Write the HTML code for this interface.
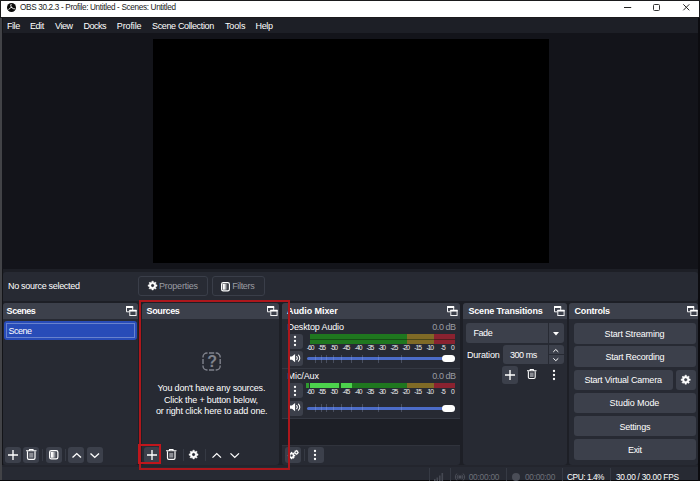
<!DOCTYPE html>
<html><head><meta charset="utf-8"><title>OBS 30.2.3 - Profile: Untitled - Scenes: Untitled</title>
<style>
*{box-sizing:border-box;margin:0;padding:0}
html,body{width:700px;height:481px;overflow:hidden;background:#1d1f26;font-family:"Liberation Sans","DejaVu Sans",sans-serif;color:#fff;font-size:9px}
.a{position:absolute}
.t{position:absolute;white-space:nowrap;line-height:12px;height:12px}
.dock{position:absolute;background:#272a33;border-radius:3px}
.dh{position:absolute;left:0;top:0;right:0;height:16px;background:#3c404b;border-radius:3px 3px 0 0}
.btn{position:absolute;background:#3c404b;border-radius:3px}
.sep{position:absolute;width:1px;background:#363a44}
svg{position:absolute;overflow:visible}
</style></head><body>
<!-- title bar -->
<div class="a" style="left:0;top:0;width:700px;height:18px;background:#1a1a1c"></div>
<div class="a" style="left:1px;top:1px;width:698px;height:16px;background:#fff"></div>
<svg style="left:7px;top:2.6px" width="9" height="9" viewBox="0 0 18 18"><circle cx="9" cy="9" r="9" fill="#0b0b0b"/><g fill="none" stroke="#fff" stroke-width="1.8" stroke-linecap="round"><path d="M8.2 2.6c-1.6 2.2-1 4.8 1.2 6.2"/><path d="M15 11.6c-2.7.3-4.700-1.400-5.600-2.800"/><path d="M3.600 12.800c1.100-2.500 3.500-3.400 5.800-4"/></g></svg>
<svg style="left:623.5px;top:7px" width="8" height="1"><rect width="7.2" height="1" fill="#222"/></svg>
<svg style="left:653px;top:4px" width="7" height="7"><rect x=".5" y=".5" width="6" height="6" rx="1" fill="none" stroke="#333" stroke-width="1"/></svg>
<svg style="left:682.5px;top:4px" width="7" height="7"><path d="M.3.3l6 6M6.300.3l-6 6" stroke="#222" stroke-width="1" fill="none"/></svg>
<!-- left window border -->
<div class="a" style="left:0;top:18px;width:2px;height:463px;background:#424347"></div>
<div class="a" style="left:2px;top:18px;width:1px;height:463px;background:#131418"></div>
<!-- menubar -->
<div class="a" style="left:3px;top:18px;width:695px;height:15px;background:#1d1f26"></div>
<!-- preview -->
<div class="a" style="left:2px;top:33px;width:698px;height:236px;background:#13141a"></div>
<div class="a" style="left:153px;top:39px;width:396px;height:224px;background:#000"></div>
<!-- context bar -->
<div class="a" style="left:3px;top:272px;width:695px;height:29px;background:#272a33;border-radius:3px 3px 3px 0"></div>
<div class="a" style="left:138px;top:276px;width:70px;height:20px;border:1px solid #3a3e49;border-radius:3px;background:#282b34"></div>
<svg style="left:147.500px;top:281.4px" width="9.2" height="9.2" viewBox="1.400 1.400 21.200 21.200"><path fill="#fff" fill-rule="evenodd" stroke="#fff" stroke-width="1" stroke-linejoin="round" d="M10.16 4.32L10.37 1.73L13.63 1.73L13.84 4.32L16.13 5.26L18.11 3.59L20.41 5.89L18.74 7.87L19.68 10.16L22.27 10.37L22.27 13.63L19.68 13.84L18.74 16.13L20.41 18.11L18.11 20.41L16.13 18.74L13.84 19.68L13.63 22.27L10.37 22.27L10.16 19.68L7.87 18.74L5.89 20.41L3.59 18.11L5.26 16.13L4.32 13.84L1.73 13.63L1.73 10.37L4.32 10.16L5.26 7.87L3.59 5.89L5.89 3.59L7.87 5.26zM16.00 12a4.0 4.0 0 1 0 -8.00 0a4.0 4.0 0 1 0 8.00 0z"/></svg>
<div class="a" style="left:212px;top:276px;width:53px;height:20px;border:1px solid #3a3e49;border-radius:3px;background:#282b34"></div>
<svg style="left:221px;top:281.500px" width="9" height="9.5" viewBox="0 0 9 9.500"><defs><linearGradient id="fg" x1="0" x2="1" y1="0" y2="0"><stop offset="0" stop-color="#fff"/><stop offset=".25" stop-color="#fff"/><stop offset=".9" stop-color="#fff" stop-opacity=".05"/></linearGradient></defs><rect x=".6" y=".6" width="7.800" height="8.300" rx="1.600" fill="none" stroke="#fff" stroke-width="1.150"/><rect x="1.700" y="1.700" width="5.600" height="6.100" rx=".5" fill="url(#fg)"/></svg>

<!-- Scenes dock -->
<div class="dock" style="left:3px;top:303px;width:135px;height:162px"><div class="dh"></div>
 <div class="a" style="left:1px;top:18px;width:133px;height:19px;background:#284cb8;border-radius:3px"></div>
 <div class="a" style="left:3px;top:20px;width:129px;height:15px;border:1px solid rgba(255,255,255,.3)"></div>
 <!-- toolbar -->
 <div class="btn" style="left:2px;top:144px;width:16px;height:16px"></div>
 <div class="btn" style="left:20px;top:144px;width:16px;height:16px"></div>
 <div class="sep" style="left:39px;top:146px;height:12px"></div>
 <div class="btn" style="left:43px;top:144px;width:16px;height:16px"></div>
 <div class="sep" style="left:62px;top:146px;height:12px"></div>
 <div class="btn" style="left:65px;top:144px;width:16px;height:16px"></div>
 <div class="btn" style="left:84px;top:144px;width:16px;height:16px"></div>
</div>
<svg style="left:7.500px;top:450px" width="10" height="10"><path d="M5 0v10M0 5h10" stroke="#fff" stroke-width="1.350" fill="none"/></svg>
<svg style="left:26px;top:449px" width="11" height="11" viewBox="0 0 11 11"><use href="#trash"/></svg>
<svg style="left:48.500px;top:450px" width="9.500" height="9.500" viewBox="0 0 9 9.500" preserveAspectRatio="none"><rect x=".6" y=".6" width="7.800" height="8.300" rx="1.600" fill="none" stroke="#fff" stroke-width="1.150"/><rect x="1.700" y="1.700" width="5.600" height="6.100" rx=".5" fill="url(#fg)"/></svg>
<svg style="left:71.500px;top:452.500px" width="9.500" height="5"><path d="M.5 4.600L4.750.6 9 4.600" stroke="#fff" stroke-width="1.400" fill="none"/></svg>
<svg style="left:90.300px;top:452.500px" width="9.500" height="5"><path d="M.5.4L4.750 4.400 9 .4" stroke="#fff" stroke-width="1.400" fill="none"/></svg>

<!-- Sources dock -->
<div class="dock" style="left:142px;top:303px;width:137px;height:162px"><div class="dh"></div>
 <div class="btn" style="left:2px;top:144px;width:16px;height:16px"></div>
 <div class="sep" style="left:41px;top:146px;height:12px"></div>
 <div class="sep" style="left:63px;top:146px;height:12px"></div>
</div>
<svg style="left:203.400px;top:352.600px" width="17.2" height="17.0" viewBox="0 0 17.2 17.0"><path d="M0 4.5V4.0A4.0 4.0 0 0 1 4.0 0H4.5M12.7 0H13.2A4.0 4.0 0 0 1 17.2 4.0V4.5M17.2 12.5V13.0A4.0 4.0 0 0 1 13.2 17.0H12.7M4.5 17.0H4.0A4.0 4.0 0 0 1 0 13.0V12.5M6.0 0H11.2M6.0 17.0H11.2M0 5.9V11.1M17.2 5.9V11.1" fill="none" stroke="#80838d" stroke-width="1.400"/></svg>
<div class="a" style="left:202.600px;top:352.400px;width:19px;height:19px;line-height:19px;text-align:center;font-size:16px;font-weight:bold;color:#80838d">?</div>
<svg style="left:147.300px;top:450px" width="10" height="10"><path d="M5 0v10M0 5h10" stroke="#fff" stroke-width="1.350" fill="none"/></svg>
<svg style="left:166px;top:449px" width="11" height="11" viewBox="0 0 11 11"><use href="#trash"/></svg>
<svg style="left:189px;top:450.400px" width="9.200" height="9.200" viewBox="1.400 1.400 21.200 21.200"><use href="#gear"/></svg>
<svg style="left:211.500px;top:452.500px" width="9.500" height="5"><path d="M.5 4.600L4.750.6 9 4.600" stroke="#fff" stroke-width="1.300" fill="none"/></svg>
<svg style="left:230.200px;top:452.500px" width="9.500" height="5"><path d="M.5.4L4.750 4.400 9 .4" stroke="#fff" stroke-width="1.300" fill="none"/></svg>

<!-- Audio Mixer dock -->
<div class="dock" style="left:282px;top:303px;width:178px;height:162px"><div class="dh"></div>
 <div class="a" style="left:0;top:116px;width:178px;height:26px;background:#1d1f26"></div>
 <div class="a" style="left:0;top:65px;width:178px;height:1px;background:#343842"></div>
 <div class="a" style="left:0;top:115px;width:178px;height:1px;background:#343842"></div>
 <div class="a" style="left:0;top:142px;width:178px;height:1px;background:#30333c"></div>
 <!-- desktop audio -->
 <div class="btn" style="left:6px;top:31px;width:15px;height:15px"></div>
 <div class="btn" style="left:6px;top:48px;width:15px;height:15px"></div>
 <div class="a" style="left:28px;top:31px;width:145px;height:10px;background:linear-gradient(90deg,#1f771f 0,#1f771f 97px,#7f6a26 97px,#7f6a26 124px,#8a2230 124px)"></div>
 <div class="a" style="left:28px;top:35.500px;width:145px;height:1px;background:#0c1a0c;opacity:.45"></div>
 <div class="a" style="left:25px;top:54px;width:148px;height:3px;background:#4c6cc8;border-radius:1.500px"></div>
 <div class="a" style="left:160px;top:52px;width:13px;height:7px;background:#fff;border-radius:3.500px"></div>
 <!-- mic -->
 <div class="btn" style="left:6px;top:80px;width:15px;height:15px"></div>
 <div class="btn" style="left:6px;top:98px;width:15px;height:15px"></div>
 <div class="a" style="left:28px;top:80px;width:145px;height:5px;background:linear-gradient(90deg,#4cd24c 0,#4cd24c 29px,#1a4f1a 29px,#1a4f1a 31px,#4cd24c 31px,#4cd24c 42px,#1f771f 42px,#1f771f 97px,#7f6a26 97px,#7f6a26 124px,#8a2230 124px)"></div>
 <div class="a" style="left:24px;top:80px;width:2.500px;height:5px;background:#2f9a2f"></div>
 <div class="a" style="left:25px;top:103.500px;width:148px;height:3px;background:#4c6cc8;border-radius:1.500px"></div>
 <div class="a" style="left:160px;top:101.500px;width:13px;height:7px;background:#fff;border-radius:3.500px"></div>
 <!-- toolbar -->
 <div class="btn" style="left:3px;top:144px;width:16px;height:16px"></div>
 <div class="sep" style="left:22px;top:146px;height:12px"></div>
 <div class="btn" style="left:26px;top:144px;width:16px;height:16px"></div>
</div>
<div class="a" style="left:315.0px;top:354.5px;width:1px;height:8px;background:#a9b6de;opacity:.26"></div>
<div class="a" style="left:320.5px;top:354.5px;width:1px;height:8px;background:#a9b6de;opacity:.26"></div>
<div class="a" style="left:326.2px;top:354.5px;width:1px;height:8px;background:#a9b6de;opacity:.26"></div>
<div class="a" style="left:333.1px;top:354.5px;width:1px;height:8px;background:#a9b6de;opacity:.26"></div>
<div class="a" style="left:340.9px;top:354.5px;width:1px;height:8px;background:#a9b6de;opacity:.26"></div>
<div class="a" style="left:350.9px;top:354.5px;width:1px;height:8px;background:#a9b6de;opacity:.26"></div>
<div class="a" style="left:361.7px;top:354.5px;width:1px;height:8px;background:#a9b6de;opacity:.26"></div>
<div class="a" style="left:377.9px;top:354.5px;width:1px;height:8px;background:#a9b6de;opacity:.26"></div>
<div class="a" style="left:400.8px;top:354.5px;width:1px;height:8px;background:#a9b6de;opacity:.26"></div>
<div class="a" style="left:315.0px;top:404.0px;width:1px;height:8px;background:#a9b6de;opacity:.26"></div>
<div class="a" style="left:320.5px;top:404.0px;width:1px;height:8px;background:#a9b6de;opacity:.26"></div>
<div class="a" style="left:326.2px;top:404.0px;width:1px;height:8px;background:#a9b6de;opacity:.26"></div>
<div class="a" style="left:333.1px;top:404.0px;width:1px;height:8px;background:#a9b6de;opacity:.26"></div>
<div class="a" style="left:340.9px;top:404.0px;width:1px;height:8px;background:#a9b6de;opacity:.26"></div>
<div class="a" style="left:350.9px;top:404.0px;width:1px;height:8px;background:#a9b6de;opacity:.26"></div>
<div class="a" style="left:361.7px;top:404.0px;width:1px;height:8px;background:#a9b6de;opacity:.26"></div>
<div class="a" style="left:377.9px;top:404.0px;width:1px;height:8px;background:#a9b6de;opacity:.26"></div>
<div class="a" style="left:400.8px;top:404.0px;width:1px;height:8px;background:#a9b6de;opacity:.26"></div>

<!-- three dots -->
<svg style="left:293.900px;top:336.200px" width="2" height="10"><use href="#dots"/></svg>
<svg style="left:293.900px;top:385.500px" width="2" height="10"><use href="#dots"/></svg>
<svg style="left:314.400px;top:449.600px" width="2" height="10"><use href="#dots"/></svg>
<!-- speakers -->
<svg style="left:290px;top:353.800px" width="10.400" height="8.300" viewBox="0 0 20 16"><use href="#spk"/></svg>
<svg style="left:290px;top:403.300px" width="10.400" height="8.300" viewBox="0 0 20 16"><use href="#spk"/></svg>
<!-- mixer gears -->
<svg style="left:288px;top:452.300px" width="7.200" height="7.200" viewBox="1.400 1.400 21.200 21.200"><use href="#gear"/></svg>
<svg style="left:293.600px;top:450px" width="4.800" height="4.800" viewBox="1.400 1.400 21.200 21.200"><use href="#gear"/></svg>

<!-- Scene Transitions dock -->
<div class="dock" style="left:463px;top:303px;width:104px;height:162px"><div class="dh"></div>
 <div class="btn" style="left:3px;top:20px;width:97.500px;height:20px"></div>
 <div class="a" style="left:85px;top:20px;width:1px;height:20px;background:#272a33"></div>
 <div class="btn" style="left:40px;top:42px;width:60.500px;height:19px"></div>
 <div class="a" style="left:85px;top:42px;width:1px;height:19px;background:#272a33"></div>
 <div class="a" style="left:86px;top:51px;width:14.500px;height:1px;background:#272a33"></div>
 <div class="btn" style="left:39px;top:63px;width:16px;height:17.500px"></div>
</div>
<svg style="left:553px;top:331.800px" width="6" height="3.400"><path d="M0 0h6L3 3.400z" fill="#fff"/></svg>
<svg style="left:553.200px;top:348.600px" width="5.600" height="3.200"><path d="M.3 2.900L2.800.5l2.500 2.400" stroke="#fff" stroke-width="1" fill="none"/></svg>
<svg style="left:553.200px;top:357.800px" width="5.600" height="3.200"><path d="M.3.3L2.800 2.700 5.300.3" stroke="#fff" stroke-width="1" fill="none"/></svg>
<svg style="left:505.100px;top:369.800px" width="10" height="10"><path d="M5 0v10M0 5h10" stroke="#fff" stroke-width="1.350" fill="none"/></svg>
<svg style="left:527px;top:369.400px" width="10" height="10.200" viewBox="0 0 11 11" preserveAspectRatio="none"><use href="#trash"/></svg>

<svg style="left:553px;top:369.800px" width="2" height="10"><use href="#dots"/></svg>
<!-- Controls dock -->
<div class="dock" style="left:569px;top:303px;width:129px;height:162px"><div class="dh"></div>
 <div class="btn" style="left:4.600px;top:20px;width:122.800px;height:20.500px"></div>
 <div class="btn" style="left:4.600px;top:43.400px;width:122.800px;height:20.500px"></div>
 <div class="btn" style="left:4.600px;top:66.600px;width:99.400px;height:20.500px"></div>
 <div class="btn" style="left:106.800px;top:66.600px;width:20.600px;height:20.500px"></div>
 <div class="btn" style="left:4.600px;top:90px;width:122.800px;height:20.300px"></div>
 <div class="btn" style="left:4.600px;top:113.200px;width:122.800px;height:20.300px"></div>
 <div class="btn" style="left:4.600px;top:136.400px;width:122.800px;height:20.300px"></div>
</div>
<svg style="left:680.900px;top:375.300px" width="9.400" height="9.400" viewBox="1.400 1.400 21.200 21.200"><use href="#gear"/></svg>

<!-- float icons -->
<svg style="left:126px;top:306px" width="11" height="10"><use href="#float"/></svg>
<svg style="left:266.500px;top:306px" width="11" height="10"><use href="#float"/></svg>
<svg style="left:447.300px;top:306px" width="11" height="10"><use href="#float"/></svg>
<svg style="left:553.500px;top:306px" width="11" height="10"><use href="#float"/></svg>
<svg style="left:687.400px;top:306px" width="11" height="10"><use href="#float"/></svg>

<!-- status bar -->
<div class="a" style="left:2px;top:465px;width:698px;height:2px;background:#23252d"></div>
<div class="a" style="left:2px;top:467px;width:698px;height:13px;background:#272a33"></div>
<div class="a" style="left:0;top:480px;width:700px;height:1px;background:#08080a"></div>
<div class="a" style="left:698px;top:18px;width:2px;height:463px;background:#0c0c10"></div>
<div class="sep" style="left:428.500px;top:468px;height:13px"></div>
<div class="sep" style="left:449.500px;top:468px;height:13px"></div>
<div class="sep" style="left:505.500px;top:468px;height:13px"></div>
<div class="sep" style="left:562px;top:468px;height:13px"></div>
<div class="sep" style="left:610px;top:468px;height:13px"></div>
<svg style="left:433.500px;top:472.500px" width="10" height="8"><g fill="#454852"><rect x="0" y="6" width="1.600" height="2"/><rect x="2.500" y="4.500" width="1.600" height="3.500"/><rect x="5" y="2.500" width="1.600" height="5.500"/><rect x="7.500" y="0" width="1.600" height="8"/></g></svg>
<svg style="left:456px;top:473px" width="8" height="8" viewBox="0 0 8 8"><g fill="none" stroke="#50535d" stroke-width=".9"><circle cx="4" cy="4" r="1.200" fill="#50535d"/><path d="M2.200 1.800a3 3 0 0 0 0 4.400M5.800 1.800a3 3 0 0 1 0 4.400M.9.600a5 5 0 0 0 0 6.800M7.100.6a5 5 0 0 1 0 6.800"/></g></svg>
<svg style="left:511.500px;top:473px" width="8" height="8"><circle cx="4" cy="4" r="4" fill="#4a4d57"/></svg>

<div class="t" style="left:20.0px;top:1.6px;font-size:8.2px;color:#1a1a1a;letter-spacing:-0.334px;">OBS 30.2.3 - Profile: Untitled - Scenes: Untitled</div>
<div class="t" style="left:7.0px;top:19.5px;font-size:9px;color:#fff;letter-spacing:-0.450px;">File</div>
<div class="t" style="left:30.0px;top:19.5px;font-size:9px;color:#fff;letter-spacing:-0.450px;">Edit</div>
<div class="t" style="left:55.0px;top:19.5px;font-size:9px;color:#fff;letter-spacing:-0.450px;">View</div>
<div class="t" style="left:83.4px;top:19.5px;font-size:9px;color:#fff;letter-spacing:-0.450px;">Docks</div>
<div class="t" style="left:116.8px;top:19.5px;font-size:9px;color:#fff;letter-spacing:-0.119px;">Profile</div>
<div class="t" style="left:152.0px;top:19.5px;font-size:9px;color:#fff;letter-spacing:-0.356px;">Scene Collection</div>
<div class="t" style="left:225.0px;top:19.5px;font-size:9px;color:#fff;letter-spacing:-0.154px;">Tools</div>
<div class="t" style="left:255.6px;top:19.5px;font-size:9px;color:#fff;letter-spacing:-0.372px;">Help</div>
<div class="t" style="left:8.0px;top:280.0px;font-size:9px;color:#fff;letter-spacing:-0.297px;">No source selected</div>
<div class="t" style="left:158.9px;top:280.0px;font-size:9px;color:#9b9da3;letter-spacing:-0.203px;">Properties</div>
<div class="t" style="left:232.2px;top:280.0px;font-size:9px;color:#9b9da3;letter-spacing:-0.333px;">Filters</div>
<div class="t" style="left:6.6px;top:305.3px;font-size:9px;color:#fff;font-weight:bold;letter-spacing:-0.450px;">Scenes</div>
<div class="t" style="left:146.5px;top:305.3px;font-size:9px;color:#fff;font-weight:bold;letter-spacing:-0.372px;">Sources</div>
<div class="t" style="left:287.0px;top:305.3px;font-size:9px;color:#fff;font-weight:bold;letter-spacing:-0.072px;">Audio Mixer</div>
<div class="t" style="left:468.4px;top:305.3px;font-size:9px;color:#fff;font-weight:bold;letter-spacing:-0.164px;">Scene Transitions</div>
<div class="t" style="left:574.6px;top:305.3px;font-size:9px;color:#fff;font-weight:bold;letter-spacing:-0.229px;">Controls</div>
<div class="t" style="left:8.4px;top:324.8px;font-size:9px;color:#fff;letter-spacing:-0.450px;">Scene</div>
<div class="t" style="left:157.6px;top:382.0px;font-size:9px;color:#fff;letter-spacing:-0.180px;">You don't have any sources.</div>
<div class="t" style="left:164.0px;top:393.6px;font-size:9px;color:#fff;letter-spacing:-0.159px;">Click the + button below,</div>
<div class="t" style="left:156.0px;top:405.0px;font-size:9px;color:#fff;letter-spacing:-0.149px;">or right click here to add one.</div>
<div class="t" style="left:287.6px;top:321.0px;font-size:9px;color:#fff;letter-spacing:-0.137px;">Desktop Audio</div>
<div class="t" style="left:432.3px;top:321.0px;font-size:9px;color:#9a9ca2;letter-spacing:-0.450px;">0.0 dB</div>
<div class="t" style="left:287.6px;top:370.3px;font-size:9px;color:#fff;letter-spacing:-0.103px;">Mic/Aux</div>
<div class="t" style="left:432.3px;top:370.3px;font-size:9px;color:#9a9ca2;letter-spacing:-0.450px;">0.0 dB</div>
<div class="t" style="left:473.5px;top:327.3px;font-size:9px;color:#fff;letter-spacing:-0.450px;">Fade</div>
<div class="t" style="left:466.9px;top:349.2px;font-size:9px;color:#fff;letter-spacing:-0.162px;">Duration</div>
<div class="t" style="left:510.0px;top:349.2px;font-size:9px;color:#fff;letter-spacing:-0.450px;">300 ms</div>
<div class="t" style="left:604.6px;top:328.0px;font-size:9px;color:#fff;letter-spacing:-0.181px;">Start Streaming</div>
<div class="t" style="left:605.6px;top:351.0px;font-size:9px;color:#fff;letter-spacing:-0.252px;">Start Recording</div>
<div class="t" style="left:584.4px;top:374.0px;font-size:9px;color:#fff;letter-spacing:-0.199px;">Start Virtual Camera</div>
<div class="t" style="left:609.6px;top:397.4px;font-size:9px;color:#fff;letter-spacing:-0.075px;">Studio Mode</div>
<div class="t" style="left:619.6px;top:420.6px;font-size:9px;color:#fff;letter-spacing:-0.247px;">Settings</div>
<div class="t" style="left:628.0px;top:444.0px;font-size:9px;color:#fff;letter-spacing:-0.339px;">Exit</div>
<div class="t" style="left:468.7px;top:471.0px;font-size:8.3px;color:#6c6f78;letter-spacing:-0.214px;">00:00:00</div>
<div class="t" style="left:525.0px;top:471.0px;font-size:8.3px;color:#6c6f78;letter-spacing:-0.285px;">00:00:00</div>
<div class="t" style="left:567.0px;top:471.0px;font-size:8.3px;color:#fff;letter-spacing:-0.450px;">CPU: 1.4%</div>
<div class="t" style="left:616.0px;top:471.0px;font-size:8.3px;color:#fff;letter-spacing:-0.243px;">30.00 / 30.00 FPS</div>
<div class="t" style="left:306.8px;top:341.6px;font-size:6.8px;color:#e8e8ea;letter-spacing:-1.064px;">-60</div>
<div class="t" style="left:318.3px;top:341.6px;font-size:6.8px;color:#e8e8ea;letter-spacing:-1.064px;">-55</div>
<div class="t" style="left:330.4px;top:341.6px;font-size:6.8px;color:#e8e8ea;letter-spacing:-1.064px;">-50</div>
<div class="t" style="left:342.5px;top:341.6px;font-size:6.8px;color:#e8e8ea;letter-spacing:-1.064px;">-45</div>
<div class="t" style="left:354.8px;top:341.6px;font-size:6.8px;color:#e8e8ea;letter-spacing:-1.064px;">-40</div>
<div class="t" style="left:366.5px;top:341.6px;font-size:6.8px;color:#e8e8ea;letter-spacing:-1.064px;">-35</div>
<div class="t" style="left:378.4px;top:341.6px;font-size:6.8px;color:#e8e8ea;letter-spacing:-1.064px;">-30</div>
<div class="t" style="left:390.5px;top:341.6px;font-size:6.8px;color:#e8e8ea;letter-spacing:-1.064px;">-25</div>
<div class="t" style="left:402.4px;top:341.6px;font-size:6.8px;color:#e8e8ea;letter-spacing:-1.064px;">-20</div>
<div class="t" style="left:414.3px;top:341.6px;font-size:6.8px;color:#e8e8ea;letter-spacing:-1.064px;">-15</div>
<div class="t" style="left:426.4px;top:341.6px;font-size:6.8px;color:#e8e8ea;letter-spacing:-1.064px;">-10</div>
<div class="t" style="left:440.7px;top:341.6px;font-size:6.8px;color:#e8e8ea;letter-spacing:-0.847px;">-5</div>
<div class="t" style="left:451.1px;top:341.6px;font-size:6.8px;color:#e8e8ea;letter-spacing:-0.581px;">0</div>
<div class="t" style="left:306.8px;top:385.6px;font-size:6.8px;color:#e8e8ea;letter-spacing:-1.064px;">-60</div>
<div class="t" style="left:318.3px;top:385.6px;font-size:6.8px;color:#e8e8ea;letter-spacing:-1.064px;">-55</div>
<div class="t" style="left:330.4px;top:385.6px;font-size:6.8px;color:#e8e8ea;letter-spacing:-1.064px;">-50</div>
<div class="t" style="left:342.5px;top:385.6px;font-size:6.8px;color:#e8e8ea;letter-spacing:-1.064px;">-45</div>
<div class="t" style="left:354.8px;top:385.6px;font-size:6.8px;color:#e8e8ea;letter-spacing:-1.064px;">-40</div>
<div class="t" style="left:366.5px;top:385.6px;font-size:6.8px;color:#e8e8ea;letter-spacing:-1.064px;">-35</div>
<div class="t" style="left:378.4px;top:385.6px;font-size:6.8px;color:#e8e8ea;letter-spacing:-1.064px;">-30</div>
<div class="t" style="left:390.5px;top:385.6px;font-size:6.8px;color:#e8e8ea;letter-spacing:-1.064px;">-25</div>
<div class="t" style="left:402.4px;top:385.6px;font-size:6.8px;color:#e8e8ea;letter-spacing:-1.064px;">-20</div>
<div class="t" style="left:414.3px;top:385.6px;font-size:6.8px;color:#e8e8ea;letter-spacing:-1.064px;">-15</div>
<div class="t" style="left:426.4px;top:385.6px;font-size:6.8px;color:#e8e8ea;letter-spacing:-1.064px;">-10</div>
<div class="t" style="left:440.7px;top:385.6px;font-size:6.8px;color:#e8e8ea;letter-spacing:-0.847px;">-5</div>
<div class="t" style="left:451.1px;top:385.6px;font-size:6.8px;color:#e8e8ea;letter-spacing:-0.581px;">0</div>

<!-- red annotations -->
<div class="a" style="left:139px;top:300px;width:150.500px;height:169.500px;border:2.200px solid #ad171c"></div>
<div class="a" style="left:138px;top:444px;width:23px;height:19.500px;border:2px solid #c0161c"></div>

<!-- shared symbols -->
<svg width="0" height="0" style="left:0;top:0"><defs>
<g id="gear"><path fill="#fff" fill-rule="evenodd" stroke="#fff" stroke-width="1" stroke-linejoin="round" d="M10.16 4.32L10.37 1.73L13.63 1.73L13.84 4.32L16.13 5.26L18.11 3.59L20.41 5.89L18.74 7.87L19.68 10.16L22.27 10.37L22.27 13.63L19.68 13.84L18.74 16.13L20.41 18.11L18.11 20.41L16.13 18.74L13.84 19.68L13.63 22.27L10.37 22.27L10.16 19.68L7.87 18.74L5.89 20.41L3.59 18.11L5.26 16.13L4.32 13.84L1.73 13.63L1.73 10.37L4.32 10.16L5.26 7.87L3.59 5.89L5.89 3.59L7.87 5.26zM16.00 12a4.0 4.0 0 1 0 -8.00 0a4.0 4.0 0 1 0 8.00 0z"/></g>
<g id="trash"><path d="M0 1.800h10.500M3.500 1.500V.5h3.500v1" stroke="#fff" stroke-width="1.100" fill="none"/><path d="M1.500 2.300v6.700a1.300 1.300 0 0 0 1.300 1.300h4.900a1.300 1.300 0 0 0 1.300-1.300V2.300" stroke="#fff" stroke-width="1.200" fill="none"/><rect x="3.200" y="3.800" width="4.100" height="4.800" fill="#8a8c93"/></g>
<g id="dots"><circle cx="1" cy="1" r="1.150" fill="#fff"/><circle cx="1" cy="5" r="1.150" fill="#fff"/><circle cx="1" cy="9" r="1.150" fill="#fff"/></g>
<g id="spk"><path d="M0 5h3.800L9.800 0v16L3.800 11H0z" fill="#fff"/><path d="M12.800 5.200a3.800 3.800 0 0 1 0 5.600" stroke="#fff" stroke-width="2.100" fill="none" stroke-linecap="round"/><path d="M16.300 2.200a8 8 0 0 1 0 11.600" stroke="#fff" stroke-width="2.100" fill="none" stroke-linecap="round"/></g>
<g id="float"><path d="M.5 1v4.800h3M6.700 1v3" stroke="#f2f2f4" stroke-width="1" fill="none"/><rect x="0" y="0" width="7.200" height="1.900" rx=".3" fill="#fff"/><rect x="3.800" y="4.600" width="6.300" height="4.900" fill="#3c404b" stroke="#f2f2f4" stroke-width="1"/><rect x="3.300" y="3.700" width="7.300" height="1.900" rx=".3" fill="#fff"/></g>
</defs></svg>
</body></html>
